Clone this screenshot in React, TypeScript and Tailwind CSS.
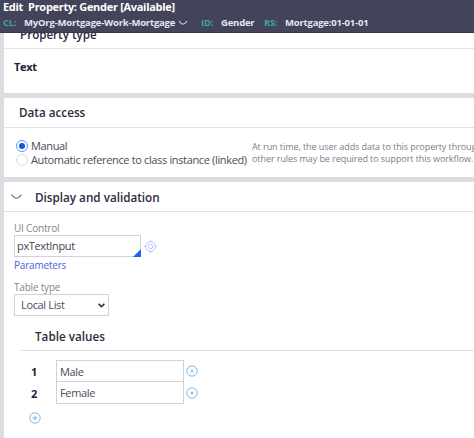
import { useState } from 'react';
import type { ReactNode } from 'react';

const initialValues = ['Male', 'Female'];

function RoundIcon({ kind }: { kind: 'remove' | 'add' }) {
  return (
    <svg width="12" height="12" viewBox="0 0 12 12" fill="none" stroke="#6fb0e6" className="block shrink-0">
      <circle cx="6" cy="6" r="5.2" strokeWidth="0.9" />
      {kind === 'add' ? (
        <path d="M6 3.8v4.4M3.8 6h4.4" strokeWidth="1" />
      ) : (
        <path d="M4.6 4.6l2.8 2.8M7.4 4.6L4.6 7.4" strokeWidth="0.9" />
      )}
    </svg>
  );
}

function TargetIcon() {
  return (
    <svg width="13" height="13" viewBox="0 0 13 13" fill="none" stroke="#a9c4f5" strokeWidth="0.9" className="block shrink-0">
      <circle cx="6.5" cy="6.5" r="4.9" />
      <circle cx="6.5" cy="6.5" r="2.3" />
      <path d="M6.5 0v2M6.5 11v2M0 6.5h2M11 6.5h2" />
    </svg>
  );
}

function Radio({ checked, label, onSelect }: { checked: boolean; label: string; onSelect: () => void }) {
  return (
    <label onClick={onSelect} className="flex h-[14px] items-center gap-[3px] text-[11px] tracking-[-0.35px] whitespace-nowrap text-[#4c4c5c]">
      <span className={`flex size-3 shrink-0 items-center justify-center rounded-full border ${checked ? 'border-[#5b9af0]' : 'border-[#d9dbe2]'}`}>
        {checked && <span className="size-1.5 rounded-full bg-[#1459cf]" />}
      </span>
      {label}
    </label>
  );
}

function Panel({ children, className }: { children: ReactNode; className: string }) {
  return <section className={`ml-1 overflow-hidden bg-white ${className}`}>{children}</section>;
}

export default function App() {
  const [mode, setMode] = useState('manual');
  const [values] = useState(initialValues);

  return (
    <div className="flex h-[438px] w-[474px] flex-col overflow-hidden bg-[#dcdce3] font-['Open_Sans','Noto_Sans',sans-serif] text-[#2b2b40]">
      {/* Rule header */}
      <header className="h-[33px] shrink-0 border-b border-[#37374a] bg-[#434359] text-white">
        <div className="flex h-[14px] items-center gap-[5px] pl-[3px] text-[11px] leading-[14px] font-bold tracking-[-0.3px] whitespace-nowrap">
          <span>Edit</span>
          <span>Property: Gender [Available]</span>
        </div>
        <div className="flex h-[18px] items-center pl-[3px] text-[9.5px] font-bold tracking-[-0.2px] whitespace-nowrap text-[#e6e6f2]">
          <span className="w-[21px] shrink-0 text-[#3fa59d]">CL:</span>
          <span className="w-[154px] shrink-0">MyOrg-Mortgage-Work-Mortgage</span>
          <svg width="10" height="6" viewBox="0 0 10 6" fill="none" stroke="#c9c9d8" strokeWidth="1.1" className="mr-[13px] shrink-0">
            <path d="M1 1.2c1.5 2 2.8 3 4 3s2.5-1 4-3" />
          </svg>
          <span className="w-5 shrink-0 text-[#3fa59d]">ID:</span>
          <span className="w-[43px] shrink-0">Gender</span>
          <span className="w-[21px] shrink-0 text-[#3fa59d]">RS:</span>
          <span>Mortgage:01-01-01</span>
        </div>
      </header>

      <Panel className="h-[60px] shrink-0">
        <div className="flex h-4 items-end border-b border-[#e4e5ec] pl-4">
          <h2 className="mb-[5px] text-[11.6px] leading-4 font-semibold">Property type</h2>
        </div>
        <p className="mt-[10px] pl-[10px] text-[11px] leading-4 font-bold tracking-[-0.3px] text-[#222238]">Text</p>
      </Panel>

      <Panel className="mt-[5px] h-[79px] shrink-0">
        <div className="flex h-[30px] items-center border-b border-[#dfe1e8] pt-px pl-[15px]">
          <h2 className="text-[11.7px] font-semibold">Data access</h2>
        </div>
        <div className="flex gap-[5px] pt-[11px] pl-3">
          <div className="w-[231px] shrink-0">
            <Radio checked={mode === 'manual'} label="Manual" onSelect={() => setMode('manual')} />
            <Radio checked={mode === 'linked'} label="Automatic reference to class instance (linked)" onSelect={() => setMode('linked')} />
          </div>
          <p className="pt-[2px] text-[9px] leading-[12px] tracking-[-0.07px] whitespace-nowrap text-[#7c7c86]">
            At run time, the user adds data to this property through
            <br />
            other rules may be required to support this workflow.
          </p>
        </div>
      </Panel>

      <Panel className="mt-[5px] grow">
        <div className="flex h-[30px] items-center border-b border-[#dfe1e8] pl-[7px]">
          <svg width="11" height="6" viewBox="0 0 11 6" fill="none" stroke="#6b6b78" strokeWidth="1.1">
            <path d="M.5.7C2.5 3 4 4.3 5.5 4.3S8.5 3 10.5.7" />
          </svg>
          <h2 className="pt-[2px] pl-[13px] text-[11.7px] font-semibold">Display and validation</h2>
        </div>

        <div className="pt-[9px] pl-[10px] text-[11px] tracking-[-0.35px] text-[#4c4c5c]">
          <div className="h-[14px] text-[10px] leading-[15px] tracking-[-0.2px] text-[#868690]">UI Control</div>
          <div className="flex items-center gap-[3px]">
            <div className="relative flex h-[22px] w-[127px] items-center border border-[#d0d2d8] pt-px pl-[2px] text-[#3f3f50]">
              pxTextInput
              <svg width="8" height="8" viewBox="0 0 8 8" className="absolute -right-px -bottom-px">
                <path d="M8 0v8H0z" fill="#1c62ea" />
              </svg>
            </div>
            <TargetIcon />
          </div>
          <a className="block h-4 text-[10px] leading-4 tracking-[-0.2px] text-[#4a63e0]">Parameters</a>
          <div className="mt-[7px] h-[14px] text-[10px] leading-[15px] tracking-[-0.2px] text-[#868690]">Table type</div>
          <div className="flex h-[22px] w-[95px] items-center justify-between border border-[#d0d2d8] pr-[3px] pl-[6px]">
            Local List
            <svg width="7" height="5" viewBox="0 0 7 5" fill="none" stroke="#222" strokeWidth="1.6">
              <path d="M.6.8l2.9 2.9L6.4.8" />
            </svg>
          </div>
        </div>

        <div className="ml-4">
          <div className="flex h-[35px] items-end border-b border-[#dfe1e8] pb-[6px] pl-[15px]">
            <h3 className="text-[11.7px] leading-4 font-semibold">Table values</h3>
          </div>
          <ul className="pt-[9px]">
            {values.map((value, i) => (
              <li key={value} className="flex h-[22px] items-center">
                <span className="w-9 pt-[2px] pl-[11px] text-[11px] font-bold text-[#222238]">{i + 1}</span>
                <div className={`mr-[2px] flex h-full w-[128px] items-center border-x border-b border-[#d0d2d8] pt-[2px] pl-[3px] text-[11px] tracking-[-0.35px] text-[#4c4c5c] ${i === 0 ? 'border-t' : ''}`}>
                  {value}
                </div>
                <RoundIcon kind="remove" />
              </li>
            ))}
          </ul>
          <div className="pt-[8px] pl-[9px]">
            <RoundIcon kind="add" />
          </div>
        </div>
      </Panel>
    </div>
  );
}
